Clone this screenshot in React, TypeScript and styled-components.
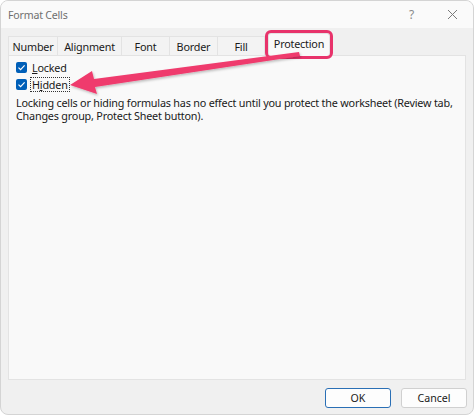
import React from "react";
import styled, { createGlobalStyle } from "styled-components";

const GlobalStyle = createGlobalStyle`
  html, body {
    margin: 0;
    padding: 0;
    background: #ffffff;
  }
  * {
    box-sizing: border-box;
  }
`;

const Window = styled.div`
  position: relative;
  width: 474px;
  height: 415px;
  display: flex;
  flex-direction: column;
  background: #f0f0f0;
  border: 1px solid #d4d4d4;
  border-radius: 8px;
  overflow: hidden;
  font-family: "Noto Sans", "Open Sans", sans-serif;
  font-size: 10.8px;
  letter-spacing: -0.2px;
  color: #1a1a1a;
`;

const TitleBar = styled.div`
  height: 27px;
  display: flex;
  align-items: center;
  padding-left: 7px;
  background: #fafafa;
`;

const Title = styled.div`
  flex: 1;
  color: #6f6f6f;
  font-size: 10.6px;
`;

const TitleButton = styled.div`
  width: 41px;
  display: flex;
  justify-content: center;
  color: #8a8a8a;
  font-size: 12px;
`;

const TabStrip = styled.div`
  display: flex;
  align-items: flex-end;
  height: 27px;
  padding-left: 7px;
`;

const Tab = styled.div<{ $w: number; $active?: boolean; $marked?: boolean }>`
  width: ${(p) => p.$w}px;
  height: ${(p) => (p.$active ? 23 : 19)}px;
  display: flex;
  align-items: center;
  justify-content: center;
  padding-bottom: ${(p) => (p.$active ? 3 : 0)}px;
  background: ${(p) => (p.$active ? "#f9f9f9" : "#f3f3f3")};
  border: 1px solid #e3e3e3;
  border-bottom: none;
  border-left: ${(p) => (p.$active ? "1px solid #e3e3e3" : "none")};
  margin-bottom: ${(p) => (p.$active ? -1 : 0)}px;
  position: relative;
  z-index: ${(p) => (p.$active ? 2 : 1)};
  outline: ${(p) => (p.$marked ? "3px solid #e8336b" : "none")};
  outline-offset: 0px;
  border-radius: ${(p) => (p.$marked ? "3px" : "0")};
  &:first-child {
    border-left: 1px solid #e3e3e3;
  }
`;

const Panel = styled.div`
  margin: 0 7px;
  height: 325px;
  background: #f9f9f9;
  border: 1px solid #e3e3e3;
  padding: 3px 6px;
`;

const CheckRow = styled.label`
  display: flex;
  align-items: center;
  gap: 4px;
  height: 17px;
  padding-left: 1px;
`;

const Box = styled.span`
  width: 11px;
  height: 11px;
  border-radius: 2px;
  background: #005fb8;
  display: flex;
  align-items: center;
  justify-content: center;
`;

const Label = styled.span<{ $focused?: boolean }>`
  padding: 0 1px;
  outline: ${(p) => (p.$focused ? "1px dotted #333" : "none")};
  line-height: 13px;
`;

const Key = styled.span`
  text-decoration: underline;
`;

const Note = styled.p`
  margin: 3px 0 0 1px;
  line-height: 13px;
  width: 450px;
`;

const Footer = styled.div`
  flex: 1;
  display: flex;
  justify-content: flex-end;
  align-items: center;
  gap: 10px;
  padding: 1px 6px 0 0;
`;

const Button = styled.button<{ $primary?: boolean }>`
  width: 66px;
  height: 20px;
  border-radius: 3px;
  background: #fdfdfd;
  border: 1px solid ${(p) => (p.$primary ? "#2a6fb5" : "#d0d0d0")};
  font-family: inherit;
  font-size: 10.6px;
  color: #1a1a1a;
  padding: 0;
`;

const Overlay = styled.svg`
  position: absolute;
  left: 0;
  top: 0;
  pointer-events: none;
  z-index: 5;
`;

const Check = () => (
  <svg width="9" height="9" viewBox="0 0 9 9">
    <path d="M1.5 4.6 L3.6 6.6 L7.6 2.4" fill="none" stroke="#fff" strokeWidth="1.2" />
  </svg>
);

const tabs = [
  { name: "Number", w: 50 },
  { name: "Alignment", w: 64 },
  { name: "Font", w: 48 },
  { name: "Border", w: 48 },
  { name: "Fill", w: 47 },
];

export default function App() {
  return (
    <>
      <GlobalStyle />
      <Window>
        <TitleBar>
          <Title>Format Cells</Title>
          <TitleButton>?</TitleButton>
          <TitleButton>
            <svg width="11" height="11" viewBox="0 0 11 11">
              <path d="M1 1 L10 10 M10 1 L1 10" stroke="#7a7a7a" strokeWidth="1" />
            </svg>
          </TitleButton>
        </TitleBar>
        <TabStrip>
          {tabs.map((t) => (
            <Tab key={t.name} $w={t.w}>
              {t.name}
            </Tab>
          ))}
          <Tab $w={62} $active $marked style={{ marginLeft: 3 }}>
            Protection
          </Tab>
        </TabStrip>
        <Panel>
          <CheckRow>
            <Box>
              <Check />
            </Box>
            <Label>
              <Key>L</Key>ocked
            </Label>
          </CheckRow>
          <CheckRow>
            <Box>
              <Check />
            </Box>
            <Label $focused>
              H<Key>i</Key>dden
            </Label>
          </CheckRow>
          <Note>
            Locking cells or hiding formulas has no effect until you protect the worksheet (Review tab,
            Changes group, Protect Sheet button).
          </Note>
        </Panel>
        <Footer>
          <Button $primary>OK</Button>
          <Button>Cancel</Button>
        </Footer>
        <Overlay width="474" height="415">
          <defs>
            <filter id="sh" x="-10%" y="-50%" width="120%" height="200%">
              <feDropShadow dx="1" dy="1.5" stdDeviation="1.2" floodColor="#000" floodOpacity="0.25" />
            </filter>
          </defs>
          <polygon
            points="298,51 299,55 94,86 96,93 69,84 91,70 93,78"
            fill="#ef3b6d"
            filter="url(#sh)"
          />
        </Overlay>
      </Window>
    </>
  );
}
